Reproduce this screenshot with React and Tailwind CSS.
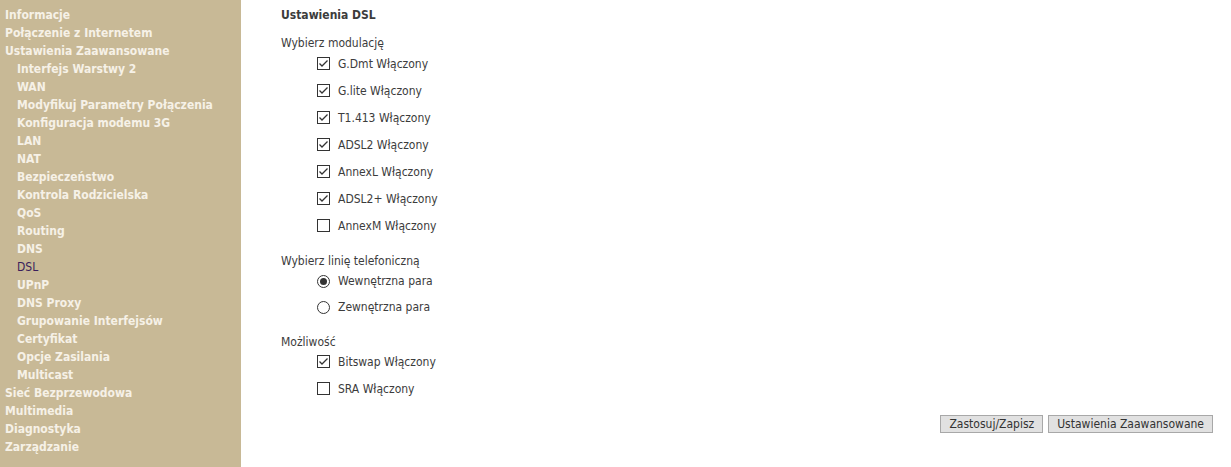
import React, { useState } from 'react';

const menu = [
    { label: 'Informacje', level: 0 },
    { label: 'Połączenie z Internetem', level: 0 },
    { label: 'Ustawienia Zaawansowane', level: 0 },
    { label: 'Interfejs Warstwy 2', level: 1 },
    { label: 'WAN', level: 1 },
    { label: 'Modyfikuj Parametry Połączenia', level: 1 },
    { label: 'Konfiguracja modemu 3G', level: 1 },
    { label: 'LAN', level: 1 },
    { label: 'NAT', level: 1 },
    { label: 'Bezpieczeństwo', level: 1 },
    { label: 'Kontrola Rodzicielska', level: 1 },
    { label: 'QoS', level: 1 },
    { label: 'Routing', level: 1 },
    { label: 'DNS', level: 1 },
    { label: 'DSL', level: 1, active: true },
    { label: 'UPnP', level: 1 },
    { label: 'DNS Proxy', level: 1 },
    { label: 'Grupowanie Interfejsów', level: 1 },
    { label: 'Certyfikat', level: 1 },
    { label: 'Opcje Zasilania', level: 1 },
    { label: 'Multicast', level: 1 },
    { label: 'Sieć Bezprzewodowa', level: 0 },
    { label: 'Multimedia', level: 0 },
    { label: 'Diagnostyka', level: 0 },
    { label: 'Zarządzanie', level: 0 },
];

const initialMods = [
    ['G.Dmt Włączony', true],
    ['G.lite Włączony', true],
    ['T1.413 Włączony', true],
    ['ADSL2 Włączony', true],
    ['AnnexL Włączony', true],
    ['ADSL2+ Włączony', true],
    ['AnnexM Włączony', false],
];

const Check = ({ checked, onToggle, label }) => (
    <label className="flex items-center h-[27px] pl-[36px] cursor-default" onClick={onToggle}>
        <span className="w-[13px] h-[13px] border border-[#333] bg-white flex items-center justify-center">
            {checked && (
                <svg width="11" height="11" viewBox="0 0 11 11">
                    <path d="M1.5 5.5 L4 8 L9.5 2.5" fill="none" stroke="#333" strokeWidth="1.3" />
                </svg>
            )}
        </span>
        <span className="ml-[8px]">{label}</span>
    </label>
);

const Radio = ({ checked, onSelect, label }) => (
    <label className="flex items-center h-[26px] pl-[36px] cursor-default" onClick={onSelect}>
        <span className="w-[13px] h-[13px] rounded-full border border-[#333] bg-white flex items-center justify-center">
            {checked && <span className="w-[7px] h-[7px] rounded-full bg-[#333]" />}
        </span>
        <span className="ml-[8px]">{label}</span>
    </label>
);

export default function App() {
    const [mods, setMods] = useState(initialMods.map((m) => m[1]));
    const [pair, setPair] = useState('inner');
    const [bitswap, setBitswap] = useState(true);
    const [sra, setSra] = useState(false);

    return (
        <div className="flex min-h-[467px] bg-white">
            {/* sidebar */}
            <div className="w-[241px] shrink-0 bg-[#c8b996] pt-[6px] font-['DejaVu_Sans_Condensed','DejaVu_Sans',sans-serif] text-[12px] font-bold">
                {menu.map((item) => (
                    <div
                        key={item.label}
                        className={`h-[18px] leading-[18px] whitespace-nowrap ${item.level ? 'pl-[17px]' : 'pl-[5px]'} ${item.active ? 'text-[#3a1f5c] font-normal' : 'text-[#f6f1e7]'}`}
                    >
                        {item.label}
                    </div>
                ))}
            </div>

            {/* content */}
            <div className="flex-1 pl-[40px] pr-[18px] pt-[6px] font-['DejaVu_Sans_Condensed','DejaVu_Sans',sans-serif] text-[12px] text-[#3c3c3c]">
                <div className="font-bold h-[18px] leading-[18px]">Ustawienia DSL</div>

                <div className="mt-[10px] h-[18px] leading-[18px]">Wybierz modulację</div>
                <div className="mt-[-2px]">
                    {initialMods.map(([label], i) => (
                        <Check
                            key={label}
                            label={label}
                            checked={mods[i]}
                            onToggle={() => setMods(mods.map((v, j) => (j === i ? !v : v)))}
                        />
                    ))}
                </div>

                <div className="mt-[13px] h-[18px] leading-[18px]">Wybierz linię telefoniczną</div>
                <div className="mt-[-2px]">
                    <Radio label="Wewnętrzna para" checked={pair === 'inner'} onSelect={() => setPair('inner')} />
                    <Radio label="Zewnętrzna para" checked={pair === 'outer'} onSelect={() => setPair('outer')} />
                </div>

                <div className="mt-[13px] h-[18px] leading-[18px]">Możliwość</div>
                <div className="mt-[-3px]">
                    <Check label="Bitswap Włączony" checked={bitswap} onToggle={() => setBitswap(!bitswap)} />
                    <Check label="SRA Włączony" checked={sra} onToggle={() => setSra(!sra)} />
                </div>

                <div className="flex justify-end gap-[5px] mt-[13px]">
                    <button className="h-[18px] px-[8px] bg-[#e1e1e1] border border-[#a8a8a8] text-[12px] leading-[16px] text-[#333]">
                        Zastosuj/Zapisz
                    </button>
                    <button className="h-[18px] px-[8px] bg-[#e1e1e1] border border-[#a8a8a8] text-[12px] leading-[16px] text-[#333]">
                        Ustawienia Zaawansowane
                    </button>
                </div>
            </div>
        </div>
    );
}
